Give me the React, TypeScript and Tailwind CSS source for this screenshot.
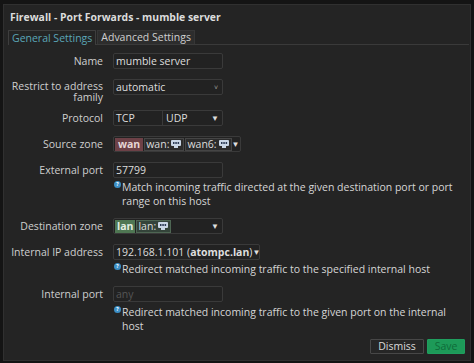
import React from "react";

function PortIcon() {
  return (
    <svg width="10" height="8" viewBox="0 0 10 8" className="inline-block ml-[2px] mr-[1px]">
      <rect x="0" y="0" width="10" height="6" rx="1" fill="#c9d6e6" />
      <rect x="2" y="2" width="1.5" height="2" fill="#2b3a55" />
      <rect x="4.3" y="2" width="1.5" height="2" fill="#2b3a55" />
      <rect x="6.6" y="2" width="1.5" height="2" fill="#2b3a55" />
      <rect x="3" y="6" width="4" height="2" fill="#c9d6e6" />
    </svg>
  );
}

function Info() {
  return (
    <span className="mt-[1px] flex items-center justify-center w-[7px] h-[7px] rounded-full bg-[#3c8fc6] text-white text-[5px] leading-none font-bold shrink-0 mr-[1px]">
      ?
    </span>
  );
}

function Desc({ children, mt }: { children: React.ReactNode; mt: string }) {
  return (
    <div className={`flex items-start text-[#d6d6d6] leading-[14px] whitespace-nowrap pl-[1px] ${mt}`}>
      <Info />
      <div>{children}</div>
    </div>
  );
}

function Row({ label, children, h = "h-[16px]" }: { label: React.ReactNode; children: React.ReactNode; h?: string }) {
  return (
    <div className="flex items-start">
      <div className={`w-[99px] text-right text-[#cfcfcf] leading-[16px] whitespace-nowrap ${h}`}>{label}</div>
      <div className="ml-[10px]">{children}</div>
    </div>
  );
}

const box = "h-[16px] border border-[#3a3a3a] rounded-[2px] bg-[#222222] flex items-center leading-none whitespace-nowrap";

export default function App() {
  return (
    <div className="w-[474px] h-[363px] bg-[#141414] pt-[4px] px-[3px] font-['Open_Sans',sans-serif] text-[10.5px] overflow-hidden">
      <div className="w-[468px] h-[357px] border border-[#303030] bg-[#242424] flex flex-col">
        <div className="pl-[6px] pt-[4px] h-[20px] font-bold text-[10.4px] leading-[16px] text-[#dcdcdc]">
          Firewall - Port Forwards - mumble server
        </div>
        <div className="mt-[5px] ml-[4px] mr-[1px] flex items-end border-b border-[#3a3a3a] h-[15px]">
          <div className="h-[15px] px-[3px] border border-b-0 border-[#3e3e3e] bg-[#242424] text-[#5ba6b8] leading-[14px] -mb-[1px] rounded-t-[1px]">
            General Settings
          </div>
          <div className="h-[14px] ml-[1px] px-[3px] border border-b-0 border-[#363636] bg-[#2d2d2d] text-[#d0d0d0] leading-[13px]">
            Advanced Settings
          </div>
        </div>

        <div className="mt-[8px] flex flex-col gap-[10px]">
          <Row label="Name">
            <div className={`${box} text-[#dedede] w-[110px] pl-[2px]`}>mumble server</div>
          </Row>

          <Row label={<span className="block leading-[11px] pt-[2px]">Restrict to address<br />family</span>} h="h-[21px]">
            <div className={`${box} text-[#dedede] w-[110px] pl-[2px] justify-between pr-[4px]`}>
              <span>automatic</span>
              <span className="text-[#9a9a9a] text-[7px]">˅</span>
            </div>
          </Row>

          <Row label="Protocol">
            <div className={`${box} text-[#dedede] w-[110px]`}>
              <span className="w-[49px] pl-[2px] h-full flex items-center border-r border-[#3a3a3a]">TCP</span>
              <span className="flex-1 pl-[3px] flex items-center justify-between pr-[3px]">
                <span>UDP</span>
                <span className="text-[8px] text-[#dcdcdc]">▼</span>
              </span>
            </div>
          </Row>

          <Row label="Source zone">
            <div className={`${box} text-[#dedede] w-[128px] pl-[1px] pr-[3px] justify-between`}>
              <span className="flex items-center gap-[1px]">
                <span className="bg-[#6d4147] text-[#e6d6d6] font-bold px-[3px] h-[13px] flex items-center">wan</span>
                <span className="bg-[#2c2c2c] border border-[#454545] px-[1px] h-[13px] flex items-center text-[#dcdcdc]">wan:<PortIcon /></span>
                <span className="bg-[#2c2c2c] border border-[#454545] px-[1px] h-[13px] flex items-center text-[#dcdcdc]">wan6:<PortIcon /></span>
              </span>
              <span className="text-[8px]">▼</span>
            </div>
          </Row>

          <Row label="External port">
            <div>
              <div className={`${box} text-[#dedede] w-[110px] pl-[2px]`}>57799</div>
              <Desc mt="mt-[2px]">
                Match incoming traffic directed at the given destination port or port
                <br />
                range on this host
              </Desc>
            </div>
          </Row>

          <Row label="Destination zone">
            <div className={`${box} text-[#dedede] w-[110px] pl-[1px] pr-[3px] justify-between`}>
              <span className="flex items-center gap-[1px]">
                <span className="bg-[#4f7753] text-[#e2eee2] font-bold px-[2px] h-[13px] flex items-center">lan</span>
                <span className="bg-[#34443a] border border-[#4e6653] px-[1px] h-[13px] flex items-center text-[#dcdcdc]">lan:<PortIcon /></span>
              </span>
              <span className="text-[8px]">▼</span>
            </div>
          </Row>

          <Row label="Internal IP address">
            <div>
              <div className={`${box} text-[#dedede] w-[147px] pl-[2px] pr-[3px] justify-between`}>
                <span>192.168.1.101 (<b>atompc.lan</b>)</span>
                <span className="text-[8px]">▼</span>
              </div>
              <Desc mt="mt-[2px]">Redirect matched incoming traffic to the specified internal host</Desc>
            </div>
          </Row>

          <Row label="Internal port">
            <div>
              <div className={`${box} text-[#555555] w-[110px] pl-[2px]`}>any</div>
              <Desc mt="mt-[3px]">
                Redirect matched incoming traffic to the given port on the internal
                <br />
                host
              </Desc>
            </div>
          </Row>
        </div>

        <div className="mt-auto mb-[6px] mr-[5px] flex justify-end gap-[3px]">
          <button className="h-[15px] w-[54px] border border-[#474747] bg-[#262626] text-[#dadada] leading-none rounded-[1px]">Dismiss</button>
          <button className="h-[15px] w-[38px] border border-[#1f9e5e] bg-[#1d9a58] text-[#0f6b38] leading-none rounded-[1px]">Save</button>
        </div>
      </div>
    </div>
  );
}
